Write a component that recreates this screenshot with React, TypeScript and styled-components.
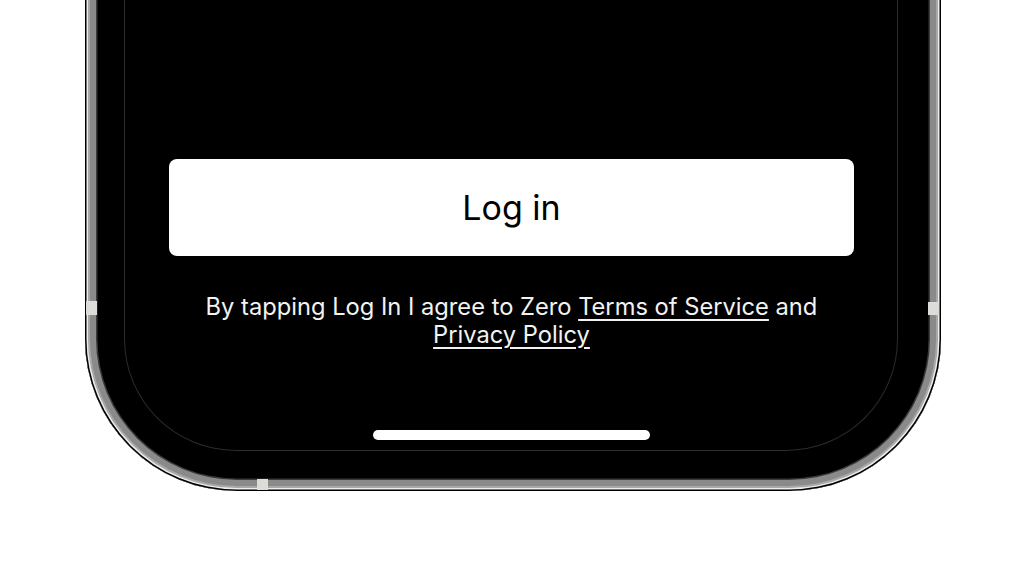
import React from 'react'
import styled, { createGlobalStyle } from 'styled-components'

const GlobalStyle = createGlobalStyle`
  html, body {
    margin: 0;
    padding: 0;
    background: #fff;
  }
  * {
    box-sizing: border-box;
  }
`

const Page = styled.div`
  height: 581px;
  width: 1029px;
  overflow: hidden;
  display: flex;
  flex-direction: column;
  justify-content: flex-end;
  padding: 0 0 90px 85px;
  background: #fff;
  font-family: Inter, 'Noto Sans', sans-serif;
`

const Frame = styled.div`
  position: relative;
  width: 856px;
  height: 620px;
  flex-shrink: 0;
  display: flex;
  background: #000;
  border-radius: 0 0 152px 152px;
  padding: 0 43px 40px 39px;
  box-shadow:
    inset 0 0 0 1.5px #000,
    inset 0 0 0 3px #ececec,
    inset 0 0 0 5px #a8a8a8,
    inset 0 0 0 11px #8a8a8a,
    inset 0 0 0 12.5px #3a3a3a;
`

const AntennaBand = styled.span<{ $side: 'left' | 'right' | 'bottom' }>`
  position: absolute;
  background: #dcdcd8;
  ${({ $side }) =>
    $side === 'left'
      ? 'left: 1px; bottom: 176px; width: 11px; height: 14px;'
      : $side === 'right'
      ? 'right: 2px; bottom: 176px; width: 11px; height: 13px;'
      : 'left: 172px; bottom: 1px; width: 11px; height: 11px;'}
`

const Screen = styled.div`
  flex: 1;
  display: flex;
  flex-direction: column;
  align-items: center;
  justify-content: flex-end;
  border: 1px solid #2c2c2c;
  border-top: none;
  border-radius: 0 0 112px 112px;
  padding: 0 43px 10px 44px;
`

const LoginButton = styled.button`
  width: 100%;
  height: 97px;
  border: none;
  border-radius: 8px;
  background: #fff;
  color: #000;
  font-family: Inter, 'Noto Sans', sans-serif;
  font-size: 34px;
  font-weight: 400;
  cursor: pointer;
`

const Legal = styled.p`
  margin: 37px 0 0;
  max-width: 640px;
  text-align: center;
  color: #f2f2f2;
  font-size: 23.7px;
  line-height: 28px;
`

const LegalLink = styled.a`
  color: inherit;
  text-decoration: underline;
  text-underline-offset: 4px;
  text-decoration-thickness: 1.5px;
`

const HomeIndicator = styled.div`
  width: 277px;
  height: 10px;
  border-radius: 5px;
  background: #fff;
  margin-top: 81px;
`

export default function App() {
  return (
    <>
      <GlobalStyle />
      <Page>
        <Frame>
          <AntennaBand $side="left" />
          <AntennaBand $side="right" />
          <AntennaBand $side="bottom" />
          <Screen>
            <LoginButton>Log in</LoginButton>
            <Legal>
              By tapping Log In I agree to Zero <LegalLink>Terms of Service</LegalLink> and{' '}
              <LegalLink>Privacy Policy</LegalLink>
            </Legal>
            <HomeIndicator />
          </Screen>
        </Frame>
      </Page>
    </>
  )
}
